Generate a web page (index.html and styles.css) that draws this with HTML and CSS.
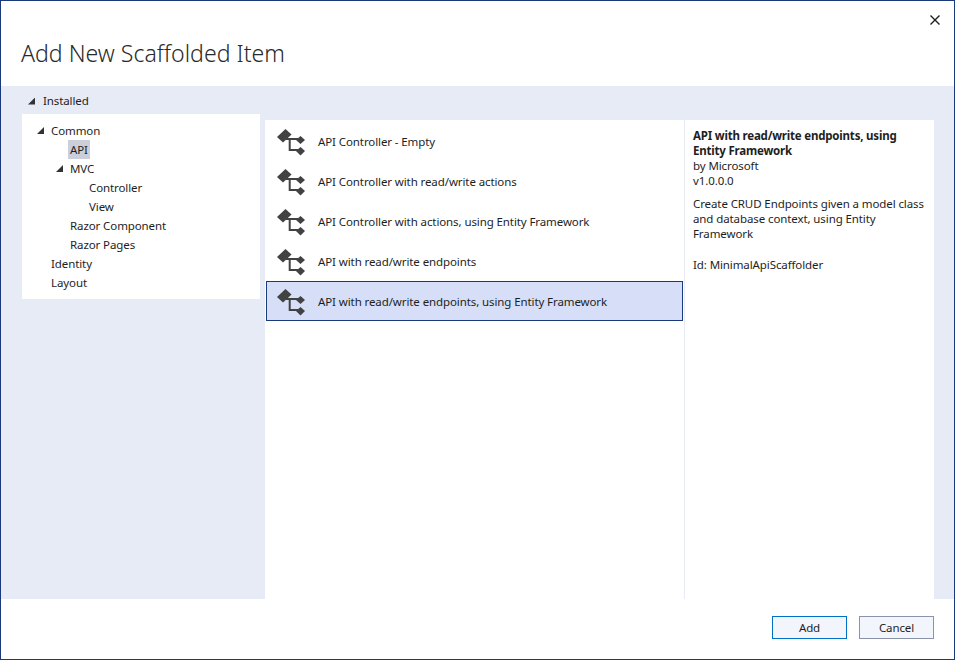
FILE: index.html
```html
<!DOCTYPE html>
<html lang="en">
<head>
<meta charset="utf-8">
<title>Add New Scaffolded Item</title>
<link rel="stylesheet" href="styles.css">
</head>
<body>
<svg class="defs" width="0" height="0"><defs>
<g id="scaffold">
<path class="ic-line" d="M10 14 H22 M13.700 14 V25 H22"/>
<path class="ic" d="M9.500 4 L15.500 9.500 L7 17.500 L1 12 Z"/>
<path class="ic" d="M24.500 11 L29 15 L24.500 19 L20 15 Z"/>
<path class="ic" d="M24.500 22 L29 26 L24.500 30.500 L20 26 Z"/>
</g>
</defs></svg>
<div class="window">
  <header class="head">
    <button class="close" aria-label="Close"><svg width="10" height="10" viewBox="0 0 10 10"><path d="M.5.500 9.500 9.500M9.500.500.500 9.500"/></svg></button>
    <h1>Add New Scaffolded Item</h1>
  </header>
  <main class="band">
    <div class="installed"><i class="tri"></i><span>Installed</span></div>
    <div class="cols">
      <nav class="tree">
        <div class="node l1"><i class="tri"></i><span>Common</span></div>
        <div class="node l2"><span class="sel">API</span></div>
        <div class="node l2"><i class="tri"></i><span>MVC</span></div>
        <div class="node l3"><span>Controller</span></div>
        <div class="node l3"><span>View</span></div>
        <div class="node l2"><span>Razor Component</span></div>
        <div class="node l2"><span>Razor Pages</span></div>
        <div class="node l1"><span>Identity</span></div>
        <div class="node l1"><span>Layout</span></div>
      </nav>
      <section class="list">
        <div class="row"><svg class="icon" viewBox="0 0 32 32"><use href="#scaffold"/></svg><span>API Controller - Empty</span></div>
        <div class="row"><svg class="icon" viewBox="0 0 32 32"><use href="#scaffold"/></svg><span>API Controller with read/write actions</span></div>
        <div class="row"><svg class="icon" viewBox="0 0 32 32"><use href="#scaffold"/></svg><span>API Controller with actions, using Entity Framework</span></div>
        <div class="row"><svg class="icon" viewBox="0 0 32 32"><use href="#scaffold"/></svg><span>API with read/write endpoints</span></div>
        <div class="row active"><svg class="icon" viewBox="0 0 32 32"><use href="#scaffold"/></svg><span>API with read/write endpoints, using Entity Framework</span></div>
      </section>
      <aside class="detail">
        <h2>API with read/write endpoints, using Entity Framework</h2>
        <p>by Microsoft</p>
        <p>v1.0.0.0</p>
        <p class="desc">Create CRUD Endpoints given a model class and database context, using Entity Framework</p>
        <p class="id">Id: MinimalApiScaffolder</p>
      </aside>
    </div>
  </main>
  <footer class="foot">
    <button class="btn primary">Add</button>
    <button class="btn">Cancel</button>
  </footer>
</div>
</body>
</html>
```
FILE: styles.css
```css
* { box-sizing: border-box; }
html, body { margin: 0; height: 100%; }
body { font-family: "Noto Sans", "Open Sans", sans-serif; font-size: 11.5px; letter-spacing: -0.1px; color: #1e1e1e; background: #fff; overflow: hidden; }
.defs { position: absolute; }
.window { width: 955px; height: 660px; border: 1px solid #1b3a7c; display: flex; flex-direction: column; background: #fff; }
.head { height: 85px; padding: 0 14px 0 20px; flex: none; }
.close { display: block; margin: 14px 0 0 auto; width: 10px; height: 10px; padding: 0; border: 0; background: none; }
.close svg { display: block; }
.close path { stroke: #1e1e1e; stroke-width: 1.4; fill: none; }
h1 { margin: 12px 0 0; font-weight: 300; font-size: 23.1px; line-height: 32px; letter-spacing: 0; color: #2a2a2a; }
.band { height: 513px; flex: none; background: #e6ebf5; display: flex; flex-direction: column; }
.installed { height: 28px; padding: 2px 0 0 27px; display: flex; align-items: center; gap: 8px; line-height: 18px; flex: none; }
.tri { display: block; width: 7px; height: 7px; background: #333; clip-path: polygon(100% 0, 100% 100%, 0 100%); flex: none; }
.cols { display: flex; flex: 1; min-height: 0; padding-right: 20px; }
.tree { width: 238px; height: 185px; margin: 0 5px 0 21px; padding-top: 7px; background: #fff; flex: none; }
.node { height: 19px; display: flex; align-items: center; position: relative; line-height: 19px; }
.node span { padding: 0 2px; }
.node .tri { position: absolute; }
.l1 { padding-left: 27px; }
.l1 .tri { left: 15px; top: 6px; }
.l2 { padding-left: 46px; }
.l2 .tri { left: 34px; top: 6px; }
.l3 { padding-left: 65px; }
.sel { background: #ccced9; }
.list { width: 419px; margin-top: 6px; padding: 1px 1px 0; background: #fff; flex: none; }
.row { height: 40px; display: flex; align-items: center; padding-left: 9px; gap: 10px; border: 1px solid transparent; }
.icon { width: 32px; height: 32px; flex: none; }
.ic { fill: #424242; }
.ic-line { fill: none; stroke: #424242; stroke-width: 2; }
.active { background: #d6def8; border-color: #1b3a7c; }
.active .ic { stroke: #fff; stroke-width: 2; paint-order: stroke; }
.active .ic-line { stroke: #424242; }
.detail { flex: 1; margin-top: 6px; padding: 8px 8px 0 8px; background: #fff; border-left: 1px solid #e6ebf5; line-height: 15px; }
.detail h2 { margin: 0; font-size: 11.5px; font-weight: 700; line-height: 15px; letter-spacing: -0.2px; color: #1e1e1e; }
.detail p { margin: 0; }
.detail .desc { margin-top: 8px; }
.detail .id { margin-top: 16px; }
.foot { flex: 1; display: flex; justify-content: flex-end; gap: 12px; padding: 17px 20px 0 0; }
.btn { width: 75px; height: 23px; padding: 0; border: 1px solid #8a93a8; background: #f3f5fc; font: inherit; letter-spacing: inherit; color: #1e1e1e; }
.primary { border-color: #0072c6; }
```
